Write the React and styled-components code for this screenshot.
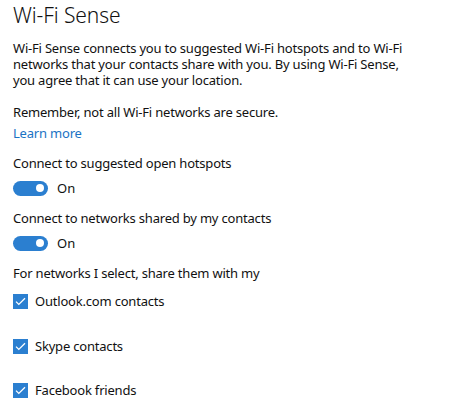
import React from "react";
import styled, { createGlobalStyle } from "styled-components";

const Global = createGlobalStyle`
  html, body { margin: 0; padding: 0; background: #fff; }
  body { font-family: "Noto Sans", "Open Sans", sans-serif; color: #111; }
`;

const Page = styled.div`
  width: 474px;
  height: 411px;
  box-sizing: border-box;
  padding: 1px 13px 0 13px;
  overflow: hidden;
  display: flex;
  flex-direction: column;
`;

const Title = styled.h1`
  margin: 0;
  font-size: 21px;
  font-weight: 300;
  line-height: 28px;
  letter-spacing: -0.1px;
`;

const Para = styled.p`
  margin: ${(p) => p.$mt || 0}px 0 0 0;
  font-size: 13px;
  line-height: 16px;
  letter-spacing: -0.2px;
`;

const Link = styled.a`
  margin-top: 5px;
  font-size: 13px;
  line-height: 16px;
  color: #1a73c4;
  text-decoration: none;
  letter-spacing: -0.2px;
`;

const Label = styled.div`
  margin-top: ${(p) => p.$mt}px;
  font-size: 13px;
  line-height: 16px;
  letter-spacing: -0.2px;
`;

const ToggleRow = styled.div`
  margin-top: 9px;
  display: flex;
  align-items: center;
  gap: 9px;
  height: 16px;
  font-size: 13px;
`;

const Track = styled.div`
  position: relative;
  width: 35px;
  height: 15px;
  border-radius: 8px;
  background: #2b7fd0;
`;

const Knob = styled.div`
  position: absolute;
  right: 4px;
  top: 3.5px;
  width: 8px;
  height: 8px;
  border-radius: 50%;
  background: #fff;
`;

const CheckRow = styled.div`
  margin-top: ${(p) => p.$mt}px;
  display: flex;
  align-items: center;
  gap: 7px;
  font-size: 13px;
  line-height: 16px;
  letter-spacing: -0.2px;
`;

const Box = styled.div`
  width: 15px;
  height: 15px;
  background: #2b7fd0;
  display: flex;
  align-items: center;
  justify-content: center;
`;

const Toggle = () => (
  <ToggleRow>
    <Track>
      <Knob />
    </Track>
    <span>On</span>
  </ToggleRow>
);

const Check = ({ mt, children }) => (
  <CheckRow $mt={mt}>
    <Box>
      <svg width="11" height="9" viewBox="0 0 11 9">
        <path d="M1 4.6 L3.8 7.4 L10 1.2" stroke="#fff" strokeWidth="1.3" fill="none" />
      </svg>
    </Box>
    <span>{children}</span>
  </CheckRow>
);

export default function App() {
  return (
    <>
      <Global />
      <Page>
        <Title>Wi-Fi Sense</Title>
        <Para $mt={11}>
          Wi-Fi Sense connects you to suggested Wi-Fi hotspots and to Wi-Fi
          <br />
          networks that your contacts share with you. By using Wi-Fi Sense,
          <br />
          you agree that it can use your location.
        </Para>
        <Para $mt={16}>Remember, not all Wi-Fi networks are secure.</Para>
        <Link href="#">Learn more</Link>
        <Label $mt={14}>Connect to suggested open hotspots</Label>
        <Toggle />
        <Label $mt={14}>Connect to networks shared by my contacts</Label>
        <Toggle />
        <Label $mt={14}>For networks I select, share them with my</Label>
        <Check mt={12}>Outlook.com contacts</Check>
        <Check mt={29}>Skype contacts</Check>
        <Check mt={28}>Facebook friends</Check>
      </Page>
    </>
  );
}
